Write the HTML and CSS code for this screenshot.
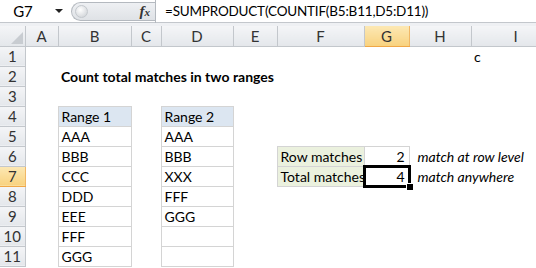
FILE: index.html
```html
<!DOCTYPE html>
<html lang="en">
<head>
  <meta charset="UTF-8">
  <title>Count total matches in two ranges</title>
  <link rel="stylesheet" href="styles.css">
</head>
<body>
  <!-- Formula bar -->
  <div class="formula-bar">
    <div class="name-box"><span class="name">G7</span><span class="arrow"></span></div>
    <div class="fx-pill"><span class="grip"></span><span class="fx">f<small>x</small></span></div>
    <div class="formula">=SUMPRODUCT(COUNTIF(B5:B11,D5:D11))</div>
  </div>
  <div class="gap"></div>

  <!-- Sheet -->
  <table class="sheet">
    <colgroup>
      <col class="w-hdr"><col class="w-a"><col class="w-b"><col class="w-c"><col class="w-d">
      <col class="w-e"><col class="w-f"><col class="w-g"><col class="w-h"><col class="w-i">
    </colgroup>
    <tr class="col-head">
      <th class="corner"><span class="tri"></span></th>
      <th>A</th><th>B</th><th>C</th><th>D</th><th>E</th><th>F</th><th class="sel">G</th><th>H</th><th>I</th>
    </tr>
    <tr>
      <th class="row-head">1</th>
      <td></td><td></td><td></td><td></td><td></td><td></td><td></td><td></td><td>c</td>
    </tr>
    <tr>
      <th class="row-head">2</th>
      <td></td><td class="title">Count total matches in two ranges</td><td></td><td></td><td></td><td></td><td></td><td></td><td></td>
    </tr>
    <tr>
      <th class="row-head">3</th>
      <td></td><td></td><td></td><td></td><td></td><td></td><td></td><td></td><td></td>
    </tr>
    <tr>
      <th class="row-head">4</th>
      <td></td><td class="box head">Range 1</td><td></td><td class="box head">Range 2</td><td></td><td></td><td></td><td></td><td></td>
    </tr>
    <tr>
      <th class="row-head">5</th>
      <td></td><td class="box">AAA</td><td></td><td class="box">AAA</td><td></td><td></td><td></td><td></td><td></td>
    </tr>
    <tr>
      <th class="row-head">6</th>
      <td></td><td class="box">BBB</td><td></td><td class="box">BBB</td><td></td>
      <td class="box label">Row matches</td><td class="box num">2</td><td class="note">match at row level</td><td></td>
    </tr>
    <tr>
      <th class="row-head sel">7</th>
      <td></td><td class="box">CCC</td><td></td><td class="box">XXX</td><td></td>
      <td class="box label">Total matches</td><td class="box num active">4</td><td class="note">match anywhere</td><td></td>
    </tr>
    <tr>
      <th class="row-head">8</th>
      <td></td><td class="box">DDD</td><td></td><td class="box">FFF</td><td></td><td></td><td></td><td></td><td></td>
    </tr>
    <tr>
      <th class="row-head">9</th>
      <td></td><td class="box">EEE</td><td></td><td class="box">GGG</td><td></td><td></td><td></td><td></td><td></td>
    </tr>
    <tr>
      <th class="row-head">10</th>
      <td></td><td class="box">FFF</td><td></td><td class="box"></td><td></td><td></td><td></td><td></td><td></td>
    </tr>
    <tr>
      <th class="row-head">11</th>
      <td></td><td class="box">GGG</td><td></td><td class="box"></td><td></td><td></td><td></td><td></td><td></td>
    </tr>
  </table>
</body>
</html>
```

FILE: styles.css
```css
/* Base */
body {
  margin: 0;
  background: #fff;
  font-family: 'Lato', 'Liberation Sans', sans-serif;
  color: #000;
  overflow: hidden;
}

/* Formula bar */
.formula-bar {
  display: flex;
  align-items: center;
  height: 23px;
  border-bottom: 1px solid #c3c7cc;
  box-sizing: border-box;
}

.name-box {
  width: 71px;
  display: flex;
  align-items: center;
  font-size: 15px;
}

.name-box .name {
  width: 46px;
  text-align: center;
}

.name-box .arrow {
  margin-left: 9px;
  width: 0;
  height: 0;
  border-left: 4px solid transparent;
  border-right: 4px solid transparent;
  border-top: 4px solid #222;
}

.fx-pill {
  width: 84px;
  height: 19px;
  display: flex;
  align-items: center;
  justify-content: space-between;
  box-sizing: border-box;
  background: linear-gradient(#eef0f3, #dfe2e6);
  border: 1px solid #b4b9bf;
  border-right: none;
  border-radius: 10px 0 0 10px;
}

.fx-pill .grip {
  margin-left: 3px;
  width: 11px;
  height: 11px;
  border-radius: 50%;
  background: radial-gradient(circle at 40% 35%, #ffffff, #c9cdd2);
  border: 1px solid #c4c8cd;
}

.fx-pill .fx {
  margin-right: 5px;
  font-family: 'Liberation Serif', serif;
  font-style: italic;
  font-weight: bold;
  font-size: 15px;
  color: #333;
}

.fx-pill .fx small {
  font-size: 11px;
}

.formula {
  flex: 1;
  height: 23px;
  line-height: 22px;
  padding-left: 9px;
  border-left: 1px solid #b4b9bf;
  font-size: 13.5px;
  letter-spacing: -0.2px;
  white-space: nowrap;
}

.gap {
  height: 3px;
  background: #eef0f3;
}

/* Sheet grid */
.sheet {
  table-layout: fixed;
  border-collapse: collapse;
  width: 560px;
  font-size: 14px;
}

.w-hdr { width: 25px; }
.w-a { width: 33px; }
.w-b { width: 73px; }
.w-c { width: 30px; }
.w-d { width: 72px; }
.w-e { width: 44px; }
.w-f { width: 87px; }
.w-g { width: 45px; }
.w-h { width: 62px; }
.w-i { width: 89px; }

.sheet tr {
  height: 20px;
}

.sheet th {
  padding: 0;
  font-weight: normal;
  font-size: 15px;
  color: #333;
  background: linear-gradient(#f4f5f7, #e4e7eb);
  border-right: 1px solid #c3c7cc;
  border-bottom: 1px solid #c3c7cc;
}

.col-head {
  height: 21px;
}

.col-head th {
  text-align: center;
}

.corner {
  position: relative;
}

.corner .tri {
  position: absolute;
  right: 2px;
  bottom: 2px;
  width: 0;
  height: 0;
  border-left: 12px solid transparent;
  border-bottom: 12px solid #c8ccd1;
}

.row-head {
  background: #e4e8ee;
  text-align: center;
}

.sheet th.sel {
  background: linear-gradient(#fce8b4, #f8d27f);
  border-bottom-color: #f0a747;
  border-right-color: #f0b766;
}

.sheet td {
  padding: 0 3px;
  white-space: nowrap;
  overflow: visible;
  vertical-align: bottom;
  line-height: 19px;
}

.title {
  font-weight: bold;
}

.box {
  border: 1px solid #d4d4d4;
  overflow: hidden;
}

.head {
  background: #dce6f1;
}

.label {
  background: #ebf1de;
  overflow: hidden;
  text-overflow: clip;
}

.sheet td.num {
  text-align: right;
  padding-right: 4px;
}

.sheet td.note {
  font-style: italic;
  padding-left: 8px;
}

/* Active cell */
.active {
  position: relative;
}

.active::after {
  content: "";
  position: absolute;
  left: -2px;
  top: -2px;
  right: -2px;
  bottom: -2px;
  border: 3px solid #000;
}

.active::before {
  content: "";
  position: absolute;
  right: -5px;
  bottom: -5px;
  width: 6px;
  height: 6px;
  background: #000;
  border: 1px solid #fff;
  z-index: 1;
}
```
